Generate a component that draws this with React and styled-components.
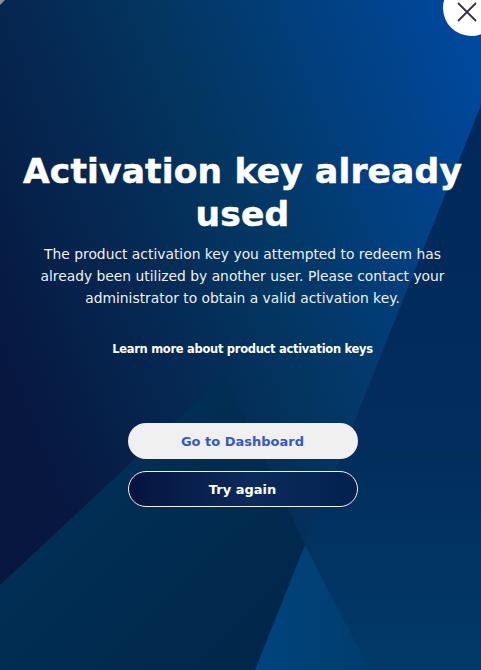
import styled, { createGlobalStyle } from "styled-components";

const GlobalStyle = createGlobalStyle`
    html, body {
        margin: 0;
        padding: 0;
        background: #07173f;
    }
    * {
        box-sizing: border-box;
    }
`;

const Backdrop = () => (
    <BackSvg viewBox="0 0 481 670" preserveAspectRatio="none">
        <defs>
            <linearGradient id="base" x1="0" y1="0.55" x2="1" y2="0">
                <stop offset="0" stopColor="#07173f" />
                <stop offset="0.5" stopColor="#033763" />
                <stop offset="1" stopColor="#004aa3" />
            </linearGradient>
            <linearGradient id="right" x1="0" y1="0" x2="0" y2="1">
                <stop offset="0" stopColor="#01285a" />
                <stop offset="0.6" stopColor="#022d5c" />
                <stop offset="1" stopColor="#013a68" />
            </linearGradient>
            <linearGradient id="facet" x1="0" y1="0" x2="1" y2="1">
                <stop offset="0" stopColor="#02335c" />
                <stop offset="1" stopColor="#012648" />
            </linearGradient>
            <linearGradient id="bright" x1="0" y1="0" x2="1" y2="0">
                <stop offset="0" stopColor="#00447f" />
                <stop offset="1" stopColor="#013c6c" />
            </linearGradient>
        </defs>
        <rect width="481" height="670" fill="url(#base)" />
        <polygon points="481,105 305,545 370,670 481,670" fill="url(#right)" />
        <polygon points="0,585 225,375 305,545 255,670 0,670" fill="url(#facet)" />
        <polygon points="305,545 255,670 370,670" fill="url(#bright)" />
        <polygon points="0,0 5,0 0,5" fill="#8a8f99" />
    </BackSvg>
);

const App = () => {
    return (
        <>
            <GlobalStyle />
            <Modal>
                <Backdrop />
                <CloseButton aria-label="Close">
                    <svg width="22" height="22" viewBox="0 0 22 22">
                        <path d="M2 2 L20 20 M20 2 L2 20" stroke="#3b2f40" strokeWidth="1.8" fill="none" />
                    </svg>
                </CloseButton>

                <Content>
                    <Title>Activation key already used</Title>
                    <Message>
                        The product activation key you attempted to redeem has
                        already been utilized by another user. Please contact your
                        administrator to obtain a valid activation key.
                    </Message>
                    <LearnLink href="#">Learn more about product activation keys</LearnLink>

                    <Actions>
                        <Button>Go to Dashboard</Button>
                        <OutlineButton>Try again</OutlineButton>
                    </Actions>
                </Content>
            </Modal>
        </>
    );
};

export default App;

const Modal = styled.div`
    position: relative;
    width: 481px;
    height: 670px;
    overflow: hidden;
    font-family: "DejaVu Sans", "Noto Sans", sans-serif;
    color: #fff;
`;

const BackSvg = styled.svg`
    position: absolute;
    inset: 0;
    width: 100%;
    height: 100%;
    z-index: 0;
`;

const CloseButton = styled.button`
    position: absolute;
    top: -20px;
    left: 443px;
    width: 56px;
    height: 56px;
    border-radius: 50%;
    border: none;
    background: #fff;
    padding: 0;
    cursor: pointer;
    z-index: 2;
    display: flex;
    align-items: flex-start;
    justify-content: flex-start;

    svg {
        margin: 21px 0 0 13px;
    }
`;

const Content = styled.div`
    position: relative;
    z-index: 1;
    display: flex;
    flex-direction: column;
    align-items: center;
    text-align: center;
    padding: 150px 14px 0 18px;
`;

const Title = styled.h1`
    margin: 0;
    font-size: 34.5px;
    line-height: 43px;
    font-weight: 700;
    letter-spacing: 0.15px;
    -webkit-text-stroke: 0.5px #fff;
    max-width: 449px;
`;

const Message = styled.p`
    margin: 7px 0 0;
    font-size: 13.85px;
    line-height: 22px;
    color: #eef1f6;
    max-width: 420px;
`;

const LearnLink = styled.a`
    margin-top: 31px;
    font-size: 11.5px;
    line-height: 18px;
    font-weight: 700;
    color: #fff;
    text-decoration: none;
    letter-spacing: -0.3px;
`;

const Actions = styled.div`
    margin-top: 65px;
    display: flex;
    flex-direction: column;
    gap: 12px;
`;

const Button = styled.button`
    width: 230px;
    height: 36px;
    border-radius: 18px;
    border: 1px solid transparent;
    background: #f0f0f0;
    color: #3359c9;
    font-family: inherit;
    font-size: 13px;
    font-weight: 700;
    cursor: pointer;
`;

const OutlineButton = styled(Button)`
    background: linear-gradient(90deg, #06143e 0%, #0b2a5c 55%, #03214f 100%);
    color: #fff;
    border: 1px solid #f2f2f2;
`;
